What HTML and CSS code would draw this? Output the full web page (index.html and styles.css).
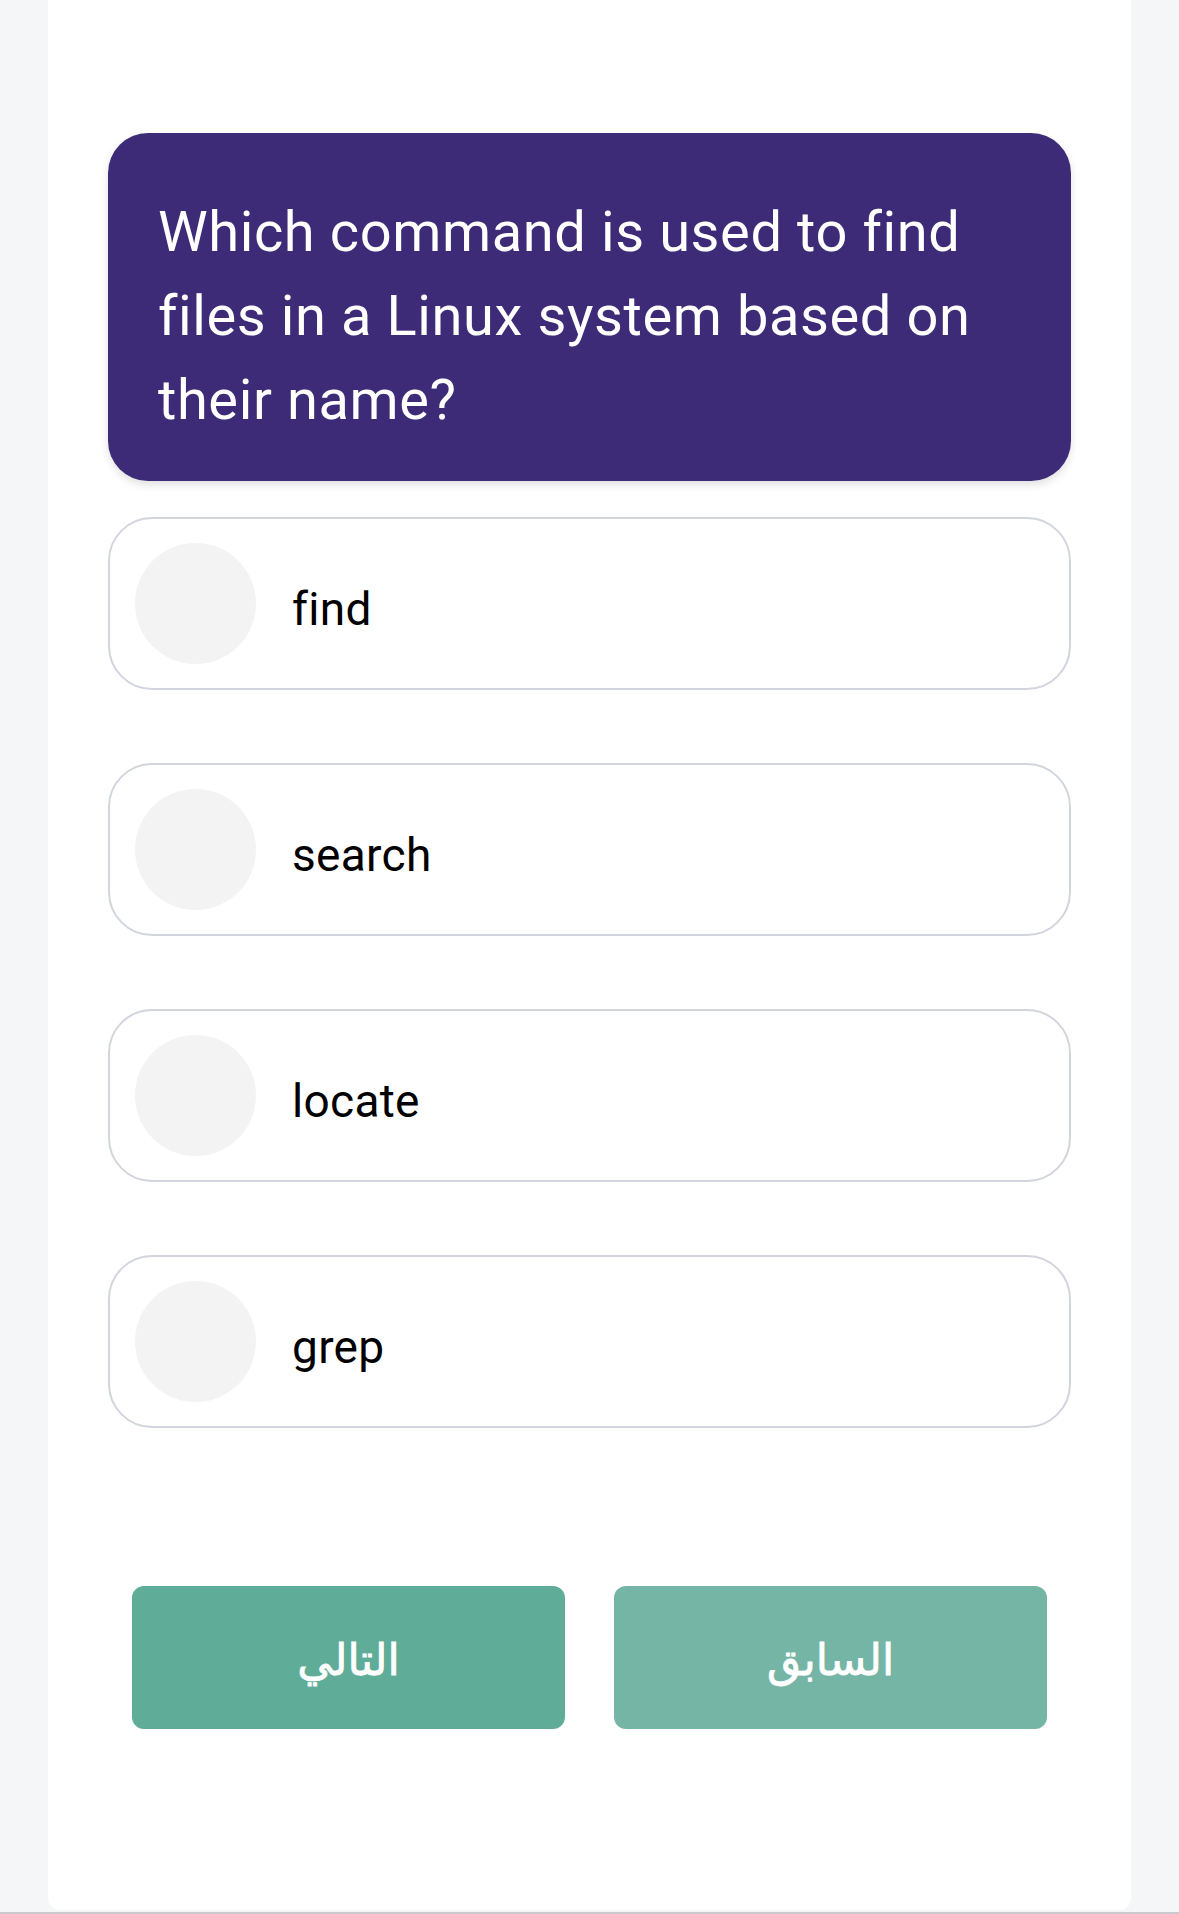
FILE: index.html
```html
<!DOCTYPE html>
<html lang="ar">
<head>
  <meta charset="UTF-8">
  <meta name="viewport" content="width=device-width, initial-scale=1.0">
  <title>Quiz</title>
  <link rel="stylesheet" href="styles.css">
</head>
<body>
  <main class="panel">
    <!-- Question -->
    <div class="question" dir="ltr">
      Which command is used to find files in a Linux system based on their name?
    </div>

    <!-- Answers -->
    <div class="answers" dir="ltr">
      <label class="answer"><span class="dot"></span><span class="answer-text">find</span></label>
      <label class="answer"><span class="dot"></span><span class="answer-text">search</span></label>
      <label class="answer"><span class="dot"></span><span class="answer-text">locate</span></label>
      <label class="answer"><span class="dot"></span><span class="answer-text">grep</span></label>
    </div>

    <!-- Navigation -->
    <div class="nav" dir="rtl">
      <button class="nav-btn prev">السابق</button>
      <button class="nav-btn next">التالي</button>
    </div>
  </main>
</body>
</html>
```

FILE: styles.css
```css
/* ======= Global ======= */
html, body {
  margin: 0;
  padding: 0;
}

body {
  font-family: Roboto, "DejaVu Sans", sans-serif;
  background: #f5f6f8;
  min-height: 1912px;
  border-bottom: 2px solid #c9c9ce;
}

.panel {
  margin: 0 48px;
  background: #fff;
  min-height: 1910px;
  box-sizing: border-box;
  padding: 133px 60px 0;
  border-radius: 0 0 12px 12px;
}

/* Question card */
.question {
  background: #3e2b77;
  color: #fff;
  border-radius: 40px;
  padding: 57px 40px 39px 50px;
  font-size: 56px;
  line-height: 84px;
  letter-spacing: 0.6px;
  box-shadow: 0 4px 8px rgba(0, 0, 0, 0.12);
}

/* Answers */
.answers {
  display: flex;
  flex-direction: column;
  gap: 73px;
  margin-top: 36px;
}

.answer {
  display: flex;
  align-items: center;
  height: 173px;
  box-sizing: border-box;
  border: 2px solid #d3d5de;
  border-radius: 44px;
  padding: 0 25px;
  cursor: pointer;
}

.dot {
  width: 121px;
  height: 121px;
  border-radius: 50%;
  background: #f3f3f4;
  flex-shrink: 0;
}

.answer-text {
  margin: 10px 0 0 36px;
  font-size: 46px;
  letter-spacing: 0.3px;
  color: #000;
}

/* Navigation buttons */
.nav {
  display: flex;
  gap: 49px;
  margin: 158px 24px 0;
}

.nav-btn {
  flex: 1;
  height: 143px;
  border: none;
  border-radius: 12px;
  color: #fff;
  font-family: Roboto, "DejaVu Sans", sans-serif;
  font-size: 44px;
  -webkit-text-stroke: 0.8px #fff;
  padding-top: 6px;
  cursor: pointer;
}

.nav-btn.next {
  background: #5fac98;
}

.nav-btn.prev {
  background: #75b5a5;
}
```
